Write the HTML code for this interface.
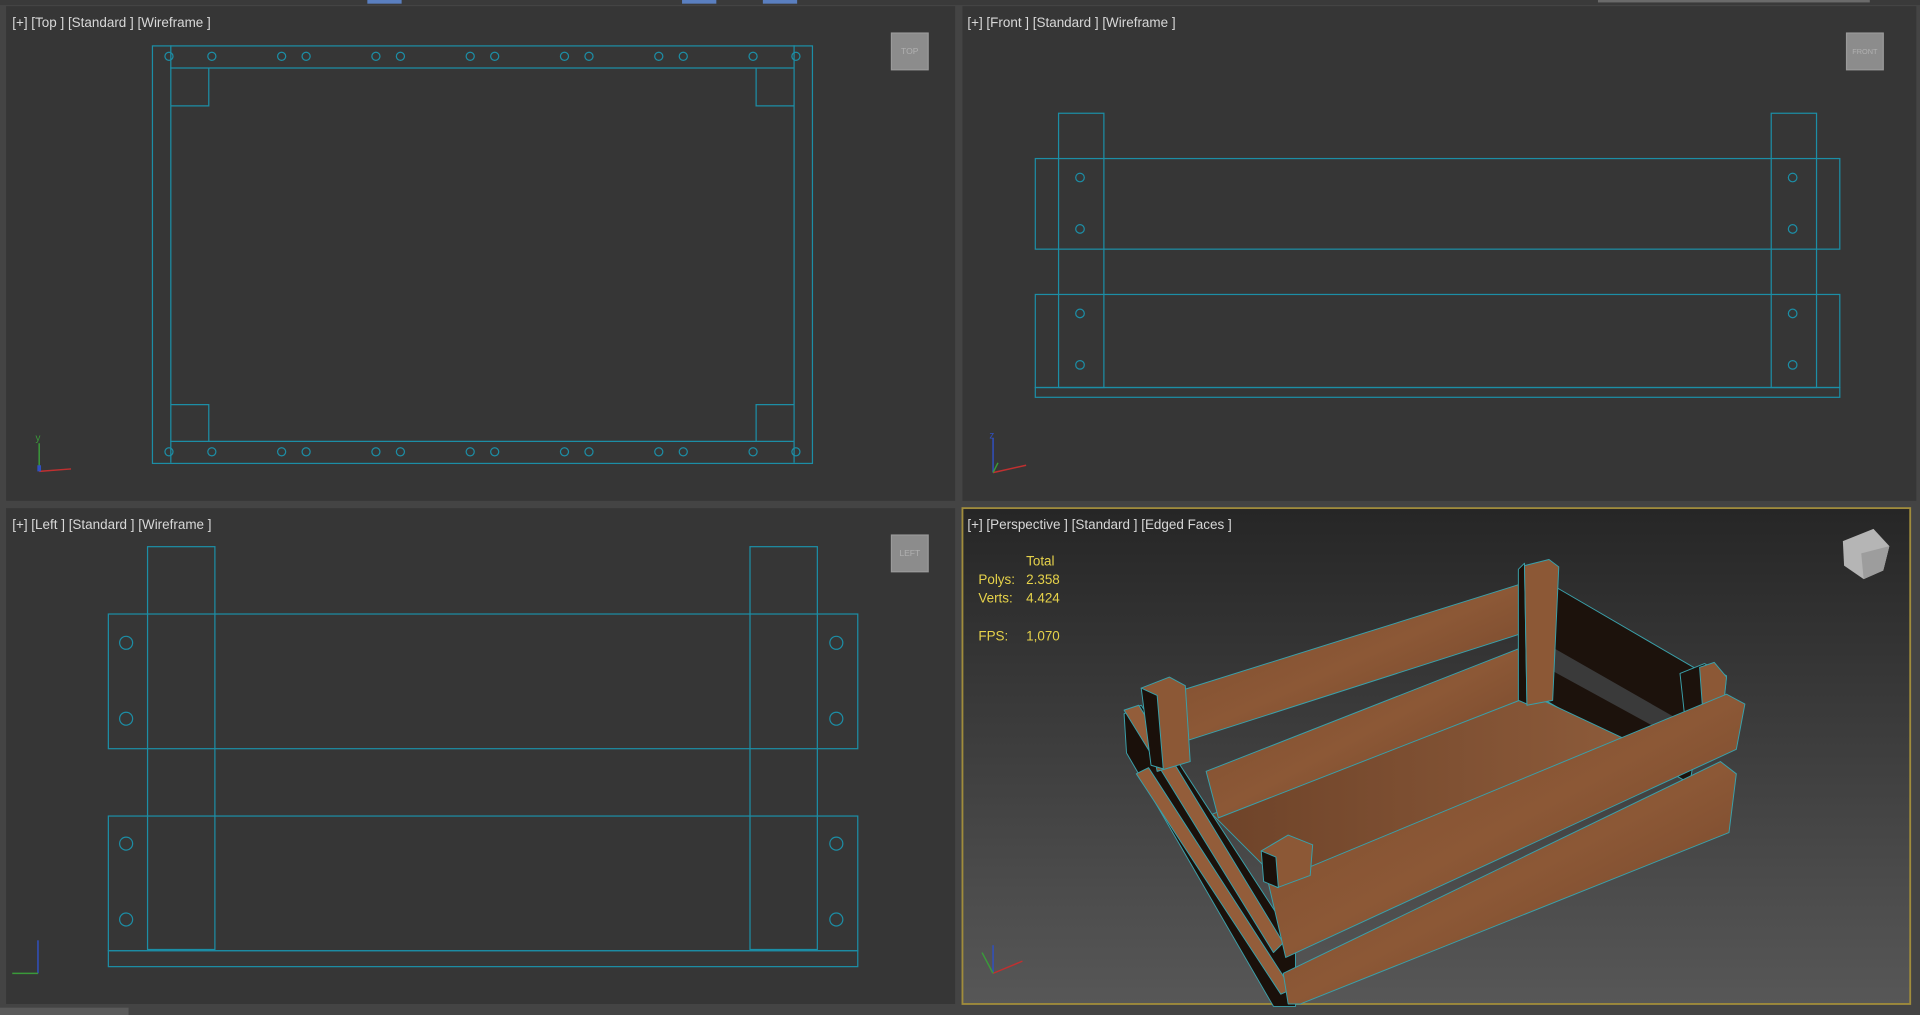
<!DOCTYPE html>
<html><head><meta charset="utf-8"><style>
html,body{margin:0;padding:0;background:#444;overflow:hidden}
svg{display:block}
text{font-family:"Liberation Sans",sans-serif;font-size:11px}
</style></head><body>
<svg width="1920" height="1015" viewBox="0 0 1568 829" preserveAspectRatio="none" xmlns="http://www.w3.org/2000/svg">
<defs>
<linearGradient id="pg" x1="0" y1="0" x2="0" y2="1"><stop offset="0" stop-color="#262626"/><stop offset="1" stop-color="#575757"/></linearGradient>
<linearGradient id="wd" x1="0" y1="0" x2="1" y2="1"><stop offset="0" stop-color="#7a4a2e"/><stop offset=".5" stop-color="#8c5836"/><stop offset="1" stop-color="#6c4028"/></linearGradient>
<linearGradient id="wd2" x1="0" y1="0" x2="1" y2="0"><stop offset="0" stop-color="#6e4329"/><stop offset="1" stop-color="#8e5c3b"/></linearGradient>
</defs>
<rect width="1568" height="829" fill="#444"/>
<rect x="0" y="0" width="1568" height="4" fill="#3a3a3a"/>
<rect x="300" y="0" width="28" height="3" fill="#5a7fc0"/>
<rect x="557" y="0" width="28" height="3" fill="#5a7fc0"/>
<rect x="623" y="0" width="28" height="3" fill="#5a7fc0"/>
<rect x="1305" y="0" width="222" height="2" fill="#6a6a6a"/>
<rect x="5" y="5" width="775" height="404" fill="#363636"/>
<rect x="786" y="5" width="779" height="404" fill="#363636"/>
<rect x="5" y="415" width="775" height="405" fill="#363636"/>
<rect x="786" y="415" width="774" height="405" fill="url(#pg)" stroke="#a08c3c" stroke-width="1.5"/>
<rect x="0" y="823" width="105" height="6" fill="#5a5a5a"/>

<g fill="#d8d8d8">
<text x="10" y="22">[+] [Top ] [Standard ] [Wireframe ]</text>
<text x="790" y="22">[+] [Front ] [Standard ] [Wireframe ]</text>
<text x="10" y="432">[+] [Left ] [Standard ] [Wireframe ]</text>
<text x="790" y="432">[+] [Perspective ] [Standard ] [Edged Faces ]</text>
</g>

<rect x="728" y="27" width="30" height="30" fill="#8c8c8c" stroke="#9a9a9a"/>
<text x="743" y="44" text-anchor="middle" fill="#b0b0b0" style="font-size:7px">TOP</text>
<rect x="1508" y="27" width="30" height="30" fill="#8c8c8c" stroke="#9a9a9a"/>
<text x="1523" y="44" text-anchor="middle" fill="#b0b0b0" style="font-size:6px">FRONT</text>
<rect x="728" y="437" width="30" height="30" fill="#8c8c8c" stroke="#9a9a9a"/>
<text x="743" y="454" text-anchor="middle" fill="#b0b0b0" style="font-size:7px">LEFT</text>
<polygon points="1505,442 1530,432 1543,446 1538,466 1522,473 1506,462" fill="#b5b5b5"/>
<polygon points="1520,452 1543,446 1538,466 1522,473" fill="#9d9d9d"/>

<g fill="none" stroke="#1c8ea6" stroke-width="1">
<rect x="124.5" y="37.5" width="539" height="341"/>
<line x1="139.5" y1="37" x2="139.5" y2="378"/><line x1="648.5" y1="37" x2="648.5" y2="378"/>
<line x1="139" y1="55.5" x2="648" y2="55.5"/><line x1="139" y1="360.5" x2="648" y2="360.5"/>
<polyline points="139.5,86.5 170.5,86.5 170.5,55.5"/><polyline points="648.5,86.5 617.5,86.5 617.5,55.5"/>
<polyline points="139.5,330.5 170.5,330.5 170.5,360.5"/><polyline points="648.5,330.5 617.5,330.5 617.5,360.5"/>
<g>
<circle cx="138" cy="46" r="3.3"/><circle cx="173" cy="46" r="3.3"/><circle cx="230" cy="46" r="3.3"/><circle cx="250" cy="46" r="3.3"/><circle cx="307" cy="46" r="3.3"/><circle cx="327" cy="46" r="3.3"/><circle cx="384" cy="46" r="3.3"/><circle cx="404" cy="46" r="3.3"/><circle cx="461" cy="46" r="3.3"/><circle cx="481" cy="46" r="3.3"/><circle cx="538" cy="46" r="3.3"/><circle cx="558" cy="46" r="3.3"/><circle cx="615" cy="46" r="3.3"/><circle cx="650" cy="46" r="3.3"/>
<circle cx="138" cy="369" r="3.3"/><circle cx="173" cy="369" r="3.3"/><circle cx="230" cy="369" r="3.3"/><circle cx="250" cy="369" r="3.3"/><circle cx="307" cy="369" r="3.3"/><circle cx="327" cy="369" r="3.3"/><circle cx="384" cy="369" r="3.3"/><circle cx="404" cy="369" r="3.3"/><circle cx="461" cy="369" r="3.3"/><circle cx="481" cy="369" r="3.3"/><circle cx="538" cy="369" r="3.3"/><circle cx="558" cy="369" r="3.3"/><circle cx="615" cy="369" r="3.3"/><circle cx="650" cy="369" r="3.3"/>
</g>
<rect x="864.5" y="92.5" width="37" height="224"/><rect x="1446.5" y="92.5" width="37" height="224"/>
<rect x="845.5" y="129.5" width="657" height="74"/><rect x="845.5" y="240.5" width="657" height="76"/>
<rect x="845.5" y="316.5" width="657" height="8"/>
<circle cx="882" cy="145" r="3.5"/><circle cx="882" cy="187" r="3.5"/><circle cx="882" cy="256" r="3.5"/><circle cx="882" cy="298" r="3.5"/>
<circle cx="1464" cy="145" r="3.5"/><circle cx="1464" cy="187" r="3.5"/><circle cx="1464" cy="256" r="3.5"/><circle cx="1464" cy="298" r="3.5"/>
<rect x="120.5" y="446.5" width="55" height="329"/><rect x="612.5" y="446.5" width="55" height="329"/>
<rect x="88.5" y="501.5" width="612" height="110"/><rect x="88.5" y="666.5" width="612" height="110"/>
<rect x="88.5" y="776.5" width="612" height="13"/>
<circle cx="103" cy="525" r="5.3"/><circle cx="103" cy="587" r="5.3"/><circle cx="103" cy="689" r="5.3"/><circle cx="103" cy="751" r="5.3"/>
<circle cx="683" cy="525" r="5.3"/><circle cx="683" cy="587" r="5.3"/><circle cx="683" cy="689" r="5.3"/><circle cx="683" cy="751" r="5.3"/>
</g>

<g stroke-width="1.2">
<line x1="32" y1="385" x2="32" y2="362" stroke="#3a9a3a"/><line x1="32" y1="385" x2="58" y2="383" stroke="#c03030"/><line x1="32" y1="385" x2="32" y2="380" stroke="#3050c0" stroke-width="3"/>
<line x1="811" y1="386" x2="811" y2="358" stroke="#3050c0"/><line x1="811" y1="386" x2="838" y2="380" stroke="#c03030"/><line x1="811" y1="386" x2="815" y2="378" stroke="#3a9a3a"/>
<line x1="31" y1="795" x2="31" y2="768" stroke="#3050c0"/><line x1="31" y1="795" x2="10" y2="795" stroke="#3a9a3a"/>
<line x1="811" y1="795" x2="811" y2="772" stroke="#3050c0"/><line x1="811" y1="795" x2="835" y2="785" stroke="#c03030"/><line x1="811" y1="795" x2="802" y2="778" stroke="#3a9a3a"/>
</g>
<text x="29" y="360" fill="#3a9a3a" style="font-size:8px">y</text>
<text x="808" y="358" fill="#3050c0" style="font-size:8px">z</text>

<g fill="#e6d24a">
<text x="838" y="462">Total</text>
<text x="799" y="477">Polys:</text><text x="838" y="477">2.358</text>
<text x="799" y="492">Verts:</text><text x="838" y="492">4.424</text>
<text x="799" y="523">FPS:</text><text x="838" y="523">1,070</text>
</g>

<g stroke="#3aa0aa" stroke-width="0.8" stroke-linejoin="round">
<polygon points="1268,478 1395,552 1380,640 1262,572" fill="#1c120c"/>
<polygon points="1270,530 1375,590 1372,605 1268,548" fill="#3a3a3a" stroke="none"/>
<polygon points="990,665 1245,565 1345,612 1045,720" fill="url(#wd2)"/>
<polygon points="958,566 1245,476 1247,516 966,606" fill="url(#wd)"/>
<polygon points="985,630 1245,528 1246,570 995,668" fill="url(#wd)"/>
<polygon points="1240,465 1245,460 1247,575 1240,572" fill="#1a100a"/>
<polygon points="1245,462 1265,457 1273,463 1268,572 1247,576" fill="#8c5836"/>
<polygon points="1372,550 1392,542 1410,552 1405,600 1378,605" fill="#1c120c"/>
<polygon points="1388,545 1400,541 1410,553 1405,600 1392,600" fill="#8c5836"/>
<polygon points="918,583 932,576 1058,770 1058,822 1040,822 920,615" fill="#1a100a"/>
<polygon points="918,580 930,576 1048,770 1040,778" fill="#935d3a"/>
<polygon points="928,632 938,627 1055,808 1046,812" fill="#935d3a"/>
<polygon points="932,562 955,553 968,560 972,622 945,630" fill="#8c5836"/>
<polygon points="932,562 945,568 950,628 940,625" fill="#1a100a"/>
<polygon points="1036,722 1410,567 1425,575 1418,612 1050,782" fill="url(#wd)"/>
<polygon points="1048,795 1405,622 1418,632 1412,680 1062,820 1052,820" fill="url(#wd)"/>
<polygon points="1030,695 1052,682 1072,690 1070,715 1043,725" fill="#8c5836"/>
<polygon points="1030,695 1042,700 1044,725 1032,720" fill="#1a100a"/>
</g>
</svg>
</body></html>
